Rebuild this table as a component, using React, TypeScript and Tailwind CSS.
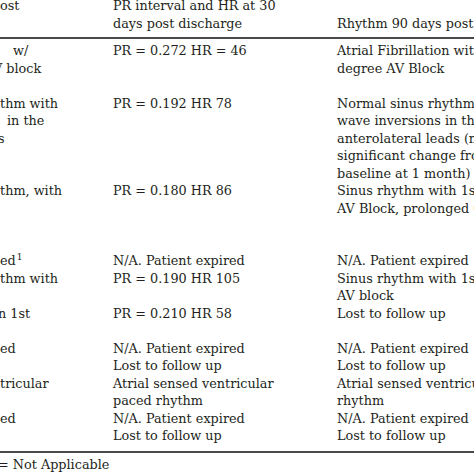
import React from "react";

type Line = { t: React.ReactNode; c?: string };

const F = "font-['DejaVu_Serif',serif]";

function Cell({ lines, clip }: { lines: Line[]; clip?: boolean }) {
  return (
    <div className={`flex flex-col ${clip ? "overflow-hidden" : ""}`}>
      {lines.map((l, i) => (
        <div key={i} className={`whitespace-nowrap h-[17.5px] ${l.c ?? ""}`}>
          {l.t === "" ? "\u00a0" : l.t}
        </div>
      ))}
    </div>
  );
}

const E: Line = { t: "" };

const rows: { a: Line[]; b: Line[]; c: Line[] }[] = [
  {
    a: [{ t: "w/", c: "pl-[13px]" }, { t: "V block", c: "-ml-[7px]" }, E],
    b: [{ t: "PR = 0.272 HR = 46" }],
    c: [{ t: "Atrial Fibrillation with 1st" }, { t: "degree AV Block" }],
  },
  {
    a: [{ t: "thm with" }, { t: "in the", c: "pl-[7px]" }, { t: "s", c: "-ml-[2px]" }, E, E],
    b: [{ t: "PR = 0.192 HR 78" }],
    c: [
      { t: "Normal sinus rhythm with T" },
      { t: "wave inversions in the" },
      { t: "anterolateral leads (no" },
      { t: "significant change from" },
      { t: "baseline at 1 month)" },
    ],
  },
  {
    a: [{ t: "thm, with" }, E, E, E],
    b: [{ t: "PR = 0.180 HR 86" }],
    c: [{ t: "Sinus rhythm with 1st degree" }, { t: "AV Block, prolonged QTc" }],
  },
  {
    a: [
      {
        t: (
          <>
            ed<span className="text-[9px] relative -top-[5px] pl-[1px]">1</span>
          </>
        ),
      },
    ],
    b: [{ t: "N/A. Patient expired" }],
    c: [{ t: "N/A. Patient expired" }],
  },
  {
    a: [{ t: "thm with" }, E],
    b: [{ t: "PR = 0.190 HR 105" }],
    c: [{ t: "Sinus rhythm with 1st degree" }, { t: "AV block" }],
  },
  {
    a: [{ t: "n 1st", c: "-ml-[2px]" }, E],
    b: [{ t: "PR = 0.210 HR 58" }],
    c: [{ t: "Lost to follow up" }],
  },
  {
    a: [{ t: "ed" }, E],
    b: [{ t: "N/A. Patient expired" }, { t: "Lost to follow up" }],
    c: [{ t: "N/A. Patient expired" }, { t: "Lost to follow up" }],
  },
  {
    a: [{ t: "tricular" }, E],
    b: [{ t: "Atrial sensed ventricular" }, { t: "paced rhythm" }],
    c: [{ t: "Atrial sensed ventricular paced" }, { t: "rhythm" }],
  },
  {
    a: [{ t: "ed" }, E],
    b: [{ t: "N/A. Patient expired" }, { t: "Lost to follow up" }],
    c: [{ t: "N/A. Patient expired" }, { t: "Lost to follow up" }],
  },
];

export default function App() {
  return (
    <div
      className={`w-[474px] h-[474px] overflow-hidden bg-white text-[#231f20] text-[12.8px] leading-[17.5px] ${F}`}
    >
      <div className="-mt-[3px]">
        <div className="grid grid-cols-[113px_224px_1fr] pb-[5px]">
          <Cell clip lines={[{ t: "ost" }, E]} />
          <Cell lines={[{ t: "PR interval and HR at 30" }, { t: "days post discharge" }]} />
          <Cell lines={[E, { t: "Rhythm 90 days post discharge" }]} />
        </div>
        <div className="h-[2px] bg-[#4a4a4a]" />
        <div className="flex flex-col pt-[3px] pb-[6px]">
          {rows.map((r, i) => (
            <div key={i} className="grid grid-cols-[113px_224px_1fr]">
              <Cell clip lines={r.a} />
              <Cell lines={r.b} />
              <Cell lines={r.c} />
            </div>
          ))}
        </div>
        <div className="h-[2px] bg-[#4a4a4a]" />
        <div className="pt-[3px] overflow-hidden">
          <div className="whitespace-nowrap -ml-[2px]">= Not Applicable</div>
        </div>
      </div>
    </div>
  );
}
